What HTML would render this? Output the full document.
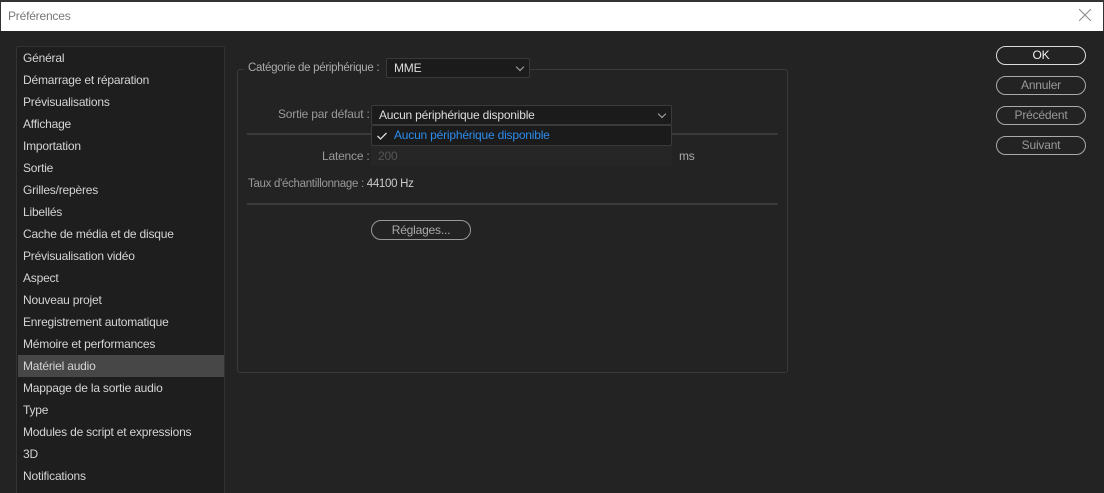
<!DOCTYPE html>
<html style="overflow:hidden;height:493px"><head><meta charset="utf-8"><style>
*{margin:0;padding:0;box-sizing:border-box}
body{width:1104px;height:493px;background:#232323;font-family:"Liberation Sans",sans-serif;font-size:12px;letter-spacing:-0.2px;color:#c8c8c8;position:relative;overflow:hidden}
.a{position:absolute;white-space:nowrap}
#tb{left:0;top:0;width:1104px;height:31px;background:#fff;border-top:2px solid #333;border-left:1px solid #333;border-right:1px solid #333}
#list{left:16px;top:46px;width:209px;height:447px;background:#1e1e1e;border:1px solid #333;border-bottom:none;border-radius:2px 2px 0 0;overflow:hidden}
.it{position:absolute;left:1px;width:206px;height:22px;line-height:22px;padding-left:5px;color:#d4d4d4}
.sel{background:#474747}
.btn{position:absolute;left:996px;width:90px;height:19px;border:1px solid #aaa;border-radius:10px;text-align:center;line-height:17px;color:#999}
.dd{position:absolute;background:#1b1b1b;border:1px solid #3a3a3a;border-radius:2px;color:#ddd;padding-left:7px}
.chev{position:absolute;right:6px;top:5px;width:6px;height:6px;border-right:1px solid #aaa;border-bottom:1px solid #aaa;transform:rotate(45deg)}
</style></head><body>
<div class="a" id="tb"><span style="position:absolute;left:7px;top:7px;color:#777;font-size:12px">Préférences</span>
<svg style="position:absolute;right:12px;top:7px" width="12" height="12"><path d="M0 0L12 12M12 0L0 12" stroke="#888" stroke-width="1"/></svg></div>
<div class="a" id="list">
<div class="it" style="top:0">Général</div>
<div class="it" style="top:22px">Démarrage et réparation</div>
<div class="it" style="top:44px">Prévisualisations</div>
<div class="it" style="top:66px">Affichage</div>
<div class="it" style="top:88px">Importation</div>
<div class="it" style="top:110px">Sortie</div>
<div class="it" style="top:132px">Grilles/repères</div>
<div class="it" style="top:154px">Libellés</div>
<div class="it" style="top:176px">Cache de média et de disque</div>
<div class="it" style="top:198px">Prévisualisation vidéo</div>
<div class="it" style="top:220px">Aspect</div>
<div class="it" style="top:242px">Nouveau projet</div>
<div class="it" style="top:264px">Enregistrement automatique</div>
<div class="it" style="top:286px">Mémoire et performances</div>
<div class="it sel" style="top:308px">Matériel audio</div>
<div class="it" style="top:330px">Mappage de la sortie audio</div>
<div class="it" style="top:352px">Type</div>
<div class="it" style="top:374px">Modules de script et expressions</div>
<div class="it" style="top:396px">3D</div>
<div class="it" style="top:418px">Notifications</div>
</div>
<div class="a" style="left:237px;top:69px;width:551px;height:304px;border:1px solid #3a3a3a;border-radius:3px"></div>
<div class="a" style="left:244px;top:58px;width:142px;height:20px;background:#232323;padding-left:4px;line-height:20px;color:#aaa;font-size:11.5px;letter-spacing:-0.3px">Catégorie de périphérique :</div>
<div class="dd" style="left:386px;top:58px;width:144px;height:20px;line-height:18px">MME<div class="chev"></div></div>
<div class="a" style="left:278px;top:107px;color:#999">Sortie par défaut :</div>
<div class="dd" style="left:371px;top:105px;width:301px;height:20px;line-height:18px">Aucun périphérique disponible<div class="chev"></div></div>
<div class="a" style="left:247px;top:133px;width:531px;height:2px;background:#3a3a3a"></div>
<div class="a" style="left:371px;top:146px;width:301px;height:20px;background:#262626"></div>
<div class="a" style="left:378px;top:149px;color:#555">200</div>
<div class="dd" style="left:371px;top:125px;width:301px;height:21px;line-height:19px;background:#1b1b1b;color:#2d8ceb;padding-left:22px">Aucun périphérique disponible
<svg style="position:absolute;left:5px;top:6px" width="10" height="8"><path d="M0.5 4L3.5 7L9.5 1" stroke="#ddd" stroke-width="1.3" fill="none"/></svg></div>
<div class="a" style="left:322px;top:149px;color:#999">Latence :</div>
<div class="a" style="left:679px;top:149px;color:#aaa">ms</div>
<div class="a" style="left:248px;top:178px;color:#999;font-size:11.5px;letter-spacing:-0.3px">Taux d'échantillonnage : <span style="color:#ccc">44100 Hz</span></div>
<div class="a" style="left:247px;top:203px;width:531px;height:2px;background:#3a3a3a"></div>
<div class="a" style="left:371px;top:220px;width:100px;height:20px;border:1px solid #999;border-radius:10px;text-align:center;line-height:18px;color:#aaa">Réglages...</div>
<div class="btn" style="top:46px;color:#eee;border-color:#ddd">OK</div>
<div class="btn" style="top:76px">Annuler</div>
<div class="btn" style="top:106px">Précédent</div>
<div class="btn" style="top:136px">Suivant</div>
</body></html>
